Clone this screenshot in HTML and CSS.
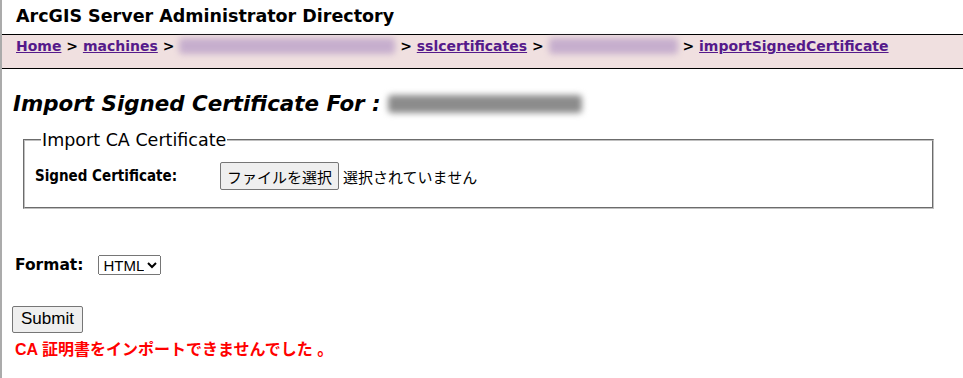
FILE: index.html
```html
<!DOCTYPE html>
<html lang="ja">
<head>
    <meta charset="UTF-8">
    <title>ArcGIS Server Administrator Directory</title>
    <link rel="stylesheet" href="styles.css">
</head>
<body>
    <div class="page">
        <div class="title">ArcGIS Server Administrator Directory</div>

        <div class="crumbs">
            <a href="#">Home</a> &gt;
            <a href="#">machines</a> &gt;
            <span class="blur blur-link"></span> &gt;
            <a href="#">sslcertificates</a> &gt;
            <span class="blur blur-short"></span> &gt;
            <a href="#">importSignedCertificate</a>
        </div>

        <div class="content">
            <h2>Import Signed Certificate For : <span class="blur blur-name"></span></h2>

            <fieldset>
                <legend>Import CA Certificate</legend>
                <div class="field-row">
                    <b class="field-label">Signed Certificate:</b>
                    <button class="file-btn" type="button">ファイルを選択</button>
                    <span class="file-name">選択されていません</span>
                </div>
            </fieldset>

            <div class="format-row">
                <b>Format:</b>
                <select class="format-select">
                    <option>HTML</option>
                    <option>JSON</option>
                </select>
            </div>

            <button class="submit" type="button">Submit</button>
            <div class="error">CA 証明書をインポートできませんでした 。</div>
        </div>
    </div>
</body>
</html>
```

FILE: styles.css
```css
body {
    margin: 0;
    font-family: "DejaVu Sans", Verdana, sans-serif;
    background: white;
}
.page {
    border-left: 2px solid #ababab;
    min-height: 100vh;
    box-sizing: border-box;
}
.title {
    font-weight: bold;
    font-size: 17.5px;
    padding: 6px 0 0 14px;
    height: 28px;
}
.crumbs {
    background: #f0e0e0;
    border-top: 1px solid black;
    border-bottom: 1px solid black;
    height: 35px;
    box-sizing: border-box;
    padding: 3px 0 0 14px;
    font-size: 14px;
    font-weight: bold;
}
.crumbs a {
    color: #551a8b;
}
.blur {
    display: inline-block;
    vertical-align: middle;
    filter: blur(3px);
    border-radius: 4px;
}
.blur-link {
    width: 216px;
    height: 16px;
    background: #c6aecd;
    margin-top: -3px;
}
.blur-short {
    width: 129px;
    height: 16px;
    background: #c6aecd;
    margin-top: -3px;
}
.blur-name {
    width: 194px;
    height: 18px;
    background: #8c8c8c;
    vertical-align: -2px;
}
.content {
    padding: 0 0 0 11px;
}
h2 {
    font-size: 21.4px;
    font-style: italic;
    margin: 22px 0 14px 0;
}
fieldset {
    margin: 0 29px 0 10px;
    padding: 12px 14px 17px 10px;
    border: 2px groove #c0c0c0;
}
legend {
    font-size: 17.5px;
    padding: 0 1px;
    margin-left: 6px;
}
.field-row {
    display: flex;
    align-items: center;
}
.field-label {
    font-family: "DejaVu Sans Condensed", "DejaVu Sans", sans-serif;
    font-stretch: condensed;
    font-size: 15px;
    margin-right: 43px;
}
.file-btn {
    font-family: "Noto Sans CJK JP", sans-serif;
    font-size: 15px;
    padding: 1px 6px;
    height: 28px;
    background: #efefef;
    border: 1px solid #767676;
    border-radius: 2px;
}
.file-name {
    font-family: "Noto Sans CJK JP", sans-serif;
    font-size: 15px;
    margin-left: 4px;
}
.format-row {
    display: flex;
    align-items: center;
    margin: 46px 0 0 2px;
    font-size: 15.5px;
}
.format-select {
    margin-left: 15px;
    font-family: "Liberation Sans", Arial, sans-serif;
    font-size: 15px;
    height: 20px;
    padding: 0;
}
.submit {
    display: block;
    margin: 31px 0 0 -1px;
    font-family: "Liberation Sans", Arial, sans-serif;
    font-size: 17px;
    padding: 2px 8px 3px 8px;
    background: #efefef;
    border: 1px solid #767676;
    border-radius: 2px;
}
.error {
    color: red;
    font-weight: bold;
    font-family: "Liberation Sans", "Noto Sans CJK JP", sans-serif;
    font-size: 16px;
    margin: 3px 0 0 2px;
}
```
